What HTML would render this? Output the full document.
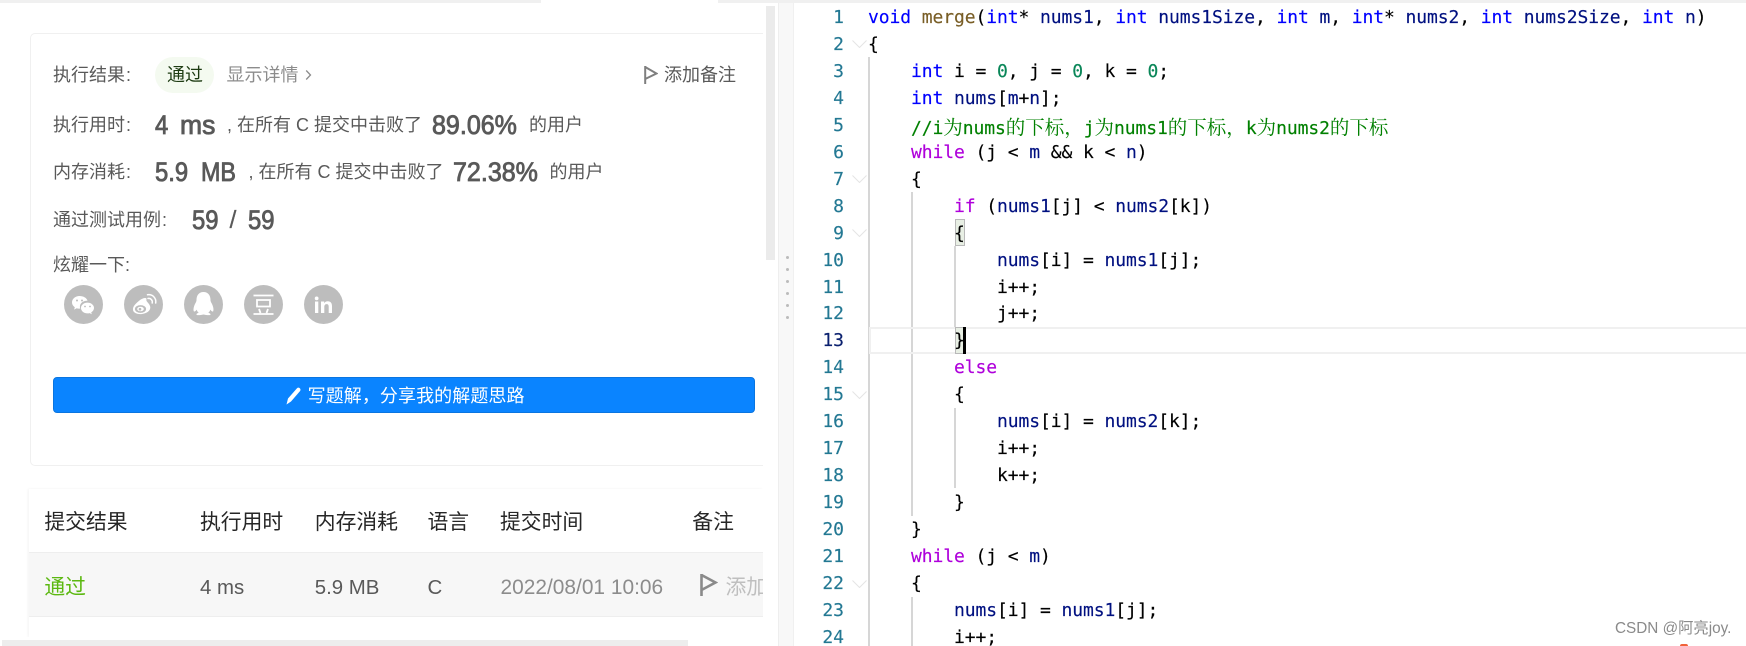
<!DOCTYPE html>
<html lang="zh"><head><meta charset="utf-8"><title>CSDN</title>
<style>
html,body{margin:0;padding:0;width:1746px;height:646px;overflow:hidden;background:#fff}
body{position:relative;font-family:"Liberation Sans","Noto Sans CJK SC",sans-serif;color:#595959}
.a{position:absolute;white-space:pre;line-height:30px;height:30px;font-size:18px}
.b{font-size:26.5px;font-weight:400;color:#595959;-webkit-text-stroke:.85px #595959;transform-origin:0 50%}
.th{font-size:20.8px;color:#262626}
.td{font-size:20.4px;color:#595959}
.box{position:absolute}
.co{position:relative;left:1px}
#code{position:absolute;left:868px;top:5px;font-family:"DejaVu Sans Mono",monospace;font-size:18px;letter-spacing:-.09px;color:#000;-webkit-text-stroke:.15px}
#code div{height:26.96px;line-height:26.96px;white-space:pre}
#nums{position:absolute;left:804px;width:40px;top:5px;text-align:right;font-family:"DejaVu Sans Mono",monospace;font-size:18px;color:#237893;-webkit-text-stroke:.15px}
#nums div{height:26.96px;line-height:26.96px}
.k{color:#00f}.v{color:#001080}.n{color:#098658}.f{color:#795e26}.c{color:#af00db}.g{color:#008000}
.z{font-family:"Noto Serif CJK SC",serif;font-size:19.5px;letter-spacing:0;-webkit-text-stroke:0}
.guide{position:absolute;width:2px;background:#d6d6d6}
.chev{position:absolute;left:852px;width:15px;height:8px}
.circ{position:absolute;top:285px;width:39px;height:39px}
</style></head><body>
<!-- top strip -->
<div class="box" style="left:0;top:0;width:1746px;height:3px;background:#f0f0f0"></div>
<div class="box" style="left:541px;top:0;width:177px;height:3px;background:#fff"></div>
<!-- gutter -->
<div class="box" style="left:778px;top:3px;width:16px;height:643px;background:#f8f8f8;border-left:1px solid #eee;box-sizing:border-box"></div>
<div class="box" style="left:793px;top:3px;width:1px;height:643px;background:#f0f0f0"></div>
<div class="box" style="left:786px;top:256px;width:3px;height:3px;border-radius:2px;background:#bbb"></div>
<div class="box" style="left:786px;top:268px;width:3px;height:3px;border-radius:2px;background:#bbb"></div>
<div class="box" style="left:786px;top:280px;width:3px;height:3px;border-radius:2px;background:#bbb"></div>
<div class="box" style="left:786px;top:292px;width:3px;height:3px;border-radius:2px;background:#bbb"></div>
<div class="box" style="left:786px;top:304px;width:3px;height:3px;border-radius:2px;background:#bbb"></div>
<div class="box" style="left:786px;top:316px;width:3px;height:3px;border-radius:2px;background:#bbb"></div>

<!-- left scrollbars -->
<div class="box" style="left:766px;top:6px;width:9px;height:254px;background:#ebebeb"></div>
<div class="box" style="left:2px;top:640px;width:686px;height:6px;background:#ededed"></div>

<!-- result card -->
<div class="box" style="left:30px;top:33px;width:733px;height:433px;box-sizing:border-box;border:1px solid #f0f0f0;border-right:0;border-radius:5px 0 0 5px"></div>

<div class="a" style="left:53px;top:60px">执行结果<span class="co">:</span></div>
<div class="box" style="left:155px;top:57px;width:59px;height:36px;border-radius:18px;background:#f4faf0"></div>
<div class="a" style="left:167px;top:60px;color:#1d3b12">通过</div>
<div class="a" style="left:226.5px;top:60px;color:#8c8c8c">显示详情</div>
<svg class="box" style="left:305px;top:69px" width="7" height="12" viewBox="0 0 7 12"><path d="M1.2 1.5 5.5 6 1.2 10.5" fill="none" stroke="#8c8c8c" stroke-width="1.3"/></svg>
<svg class="box" style="left:644px;top:65px" width="14" height="20" viewBox="0 0 14 20"><path d="M1.2 1v18M1.2 2 12.500 8.500 1.200 14" fill="none" stroke="#7f7f7f" stroke-width="2"/></svg>
<div class="a" style="left:664px;top:60px">添加备注</div>

<div class="a" style="left:53px;top:110px">执行用时<span class="co">:</span></div>
<div class="a b" style="left:155px;top:110px;transform:scaleX(.9)">4</div>
<div class="a b" style="left:180px;top:110px">ms</div>
<div class="a" style="left:227px;top:110px">, 在所有 C 提交中击败了</div>
<div class="a b" style="left:432px;top:110px;transform:scaleX(.945)">89.06%</div>
<div class="a" style="left:529px;top:110px">的用户</div>

<div class="a" style="left:53px;top:157px">内存消耗<span class="co">:</span></div>
<div class="a b" style="left:155px;top:157px;transform:scaleX(.9)">5.9</div>
<div class="a b" style="left:200.7px;top:157px;transform:scaleX(.88)">MB</div>
<div class="a" style="left:248.5px;top:157px">, 在所有 C 提交中击败了</div>
<div class="a b" style="left:453px;top:157px;transform:scaleX(.945)">72.38%</div>
<div class="a" style="left:549.5px;top:157px">的用户</div>

<div class="a" style="left:53px;top:205px">通过测试用例<span class="co">:</span></div>
<div class="a b" style="left:191.7px;top:205px;transform:scaleX(.9)">59</div>
<div class="a b" style="left:229.5px;top:205px;font-size:25px;-webkit-text-stroke:.2px #595959">/</div>
<div class="a b" style="left:248px;top:205px;transform:scaleX(.9)">59</div>

<div class="a" style="left:53px;top:250px">炫耀一下<span class="co" style="left:0">:</span></div>

<!-- share icons -->
<svg class="circ" style="left:64px" viewBox="0 0 39 39"><circle cx="19.5" cy="19.5" r="19.5" fill="#bdbdbd"/><path d="M15.5 11c-4.2 0-7.5 2.9-7.5 6.4 0 2 1.1 3.7 2.8 4.9l-.7 2.3 2.6-1.4c.9.3 1.8.4 2.8.4h.7c-.2-.6-.3-1.2-.3-1.8 0-3.300 3-6 6.900-6h.7C22.800 13 19.500 11 15.500 11z" fill="#fff"/><path d="M30 23c0-3-2.900-5.400-6.500-5.400S17 20 17 23s2.900 5.400 6.500 5.400c.8 0 1.500-.1 2.200-.3l2.100 1.200-.6-1.900c1.700-1.100 2.800-2.600 2.800-4.400z" fill="#fff"/><circle cx="13" cy="15.500" r="1" fill="#bdbdbd"/><circle cx="18" cy="15.500" r="1" fill="#bdbdbd"/><circle cx="21" cy="21.500" r=".9" fill="#bdbdbd"/><circle cx="26" cy="21.500" r=".9" fill="#bdbdbd"/></svg>
<svg class="circ" style="left:124px" viewBox="0 0 39 39"><circle cx="19.5" cy="19.500" r="19.500" fill="#bdbdbd"/><path d="M23 16.500c-1-.4-.3-2.300-.6-3-.8-1.200-4.300-.3-7.300 2.200C11.500 18.800 8.500 21.600 9 25c.6 3.300 5 4.500 9 4 5-.6 8.300-3.300 8.300-6.500 0-2.500-2.300-4.500-3.300-6z" fill="#fff"/><ellipse cx="16.500" cy="24" rx="5.600" ry="3.900" fill="#bdbdbd"/><ellipse cx="16.500" cy="24" rx="3.300" ry="2.300" fill="#fff"/><circle cx="16" cy="24.200" r="1.300" fill="#bdbdbd"/><path d="M24 13.500c2.500-.5 4.800 1.500 4.200 4.500M23.500 9.800c5-.8 9 3.200 8.200 8.200" fill="none" stroke="#fff" stroke-width="1.500" stroke-linecap="round"/></svg>
<svg class="circ" style="left:184px" viewBox="0 0 39 39"><circle cx="19.500" cy="19.500" r="19.500" fill="#bdbdbd"/><path d="M19.500 7c-4.700 0-7 3.600-7 8 0 1.200-.3 1.800-1.200 3.400-1.300 2.500-2.300 6-1.500 7.800.7 1 2-.4 2.800-1.600.4 1.300 1.100 2.400 2.100 3.200-1.500.5-2.600 1.200-2.100 1.900.7.700 3.800.5 6.900-.2 3.100.7 6.200.9 6.900.2.500-.7-.6-1.400-2.100-1.900 1-.8 1.700-1.900 2.100-3.200.8 1.200 2.100 2.600 2.800 1.600.8-1.800-.2-5.300-1.500-7.800-.9-1.600-1.200-2.200-1.200-3.400 0-4.400-2.300-8-7-8z" fill="#fff"/></svg>
<svg class="circ" style="left:244px" viewBox="0 0 39 39"><circle cx="19.500" cy="19.500" r="19.500" fill="#bdbdbd"/><path d="M9.500 10.500h20M13 15h13v6.500H13zM15 24l1.500 4M24 24l-1.500 4M9.500 29h20" fill="none" stroke="#fff" stroke-width="1.800"/></svg>
<svg class="circ" style="left:304px" viewBox="0 0 39 39"><circle cx="19.500" cy="19.500" r="19.500" fill="#bdbdbd"/><path d="M11 16.500h3.300V28H11zM12.650 11.500a1.900 1.900 0 1 1 0 3.800 1.900 1.900 0 0 1 0-3.800zM17 16.500h3.200v1.700c.7-1.200 2-2 3.500-2 3 0 4.300 1.900 4.300 5V28h-3.300v-6.200c0-1.800-.6-2.700-2-2.700-1.500 0-2.400 1-2.400 2.900v6H17z" fill="#fff"/></svg>

<!-- button -->
<div class="box" style="left:53px;top:377px;width:702px;height:36px;box-sizing:border-box;background:#0a84ff;border:1px solid #0a75e0;border-radius:4px"></div>
<svg class="box" style="left:284.500px;top:386px" width="18" height="20" viewBox="0 0 18 20"><path d="M1.500 18.500 3 12.500 12 2.200c.8-.8 2-.8 2.800 0s1 2 .2 2.900L6 15.500z" fill="#fff"/></svg>
<div class="a" style="left:307.600px;top:381px;color:#fff;letter-spacing:.08px">写题解，分享我的解题思路</div>

<!-- table -->
<div class="box" style="left:29px;top:489px;width:734px;height:148px;background:#fff;box-shadow:-1px 0 3px rgba(0,0,0,.05);clip-path:inset(-4px 0 0 -4px)"></div>
<div class="box" style="left:29px;top:552px;width:734px;height:65px;box-sizing:border-box;background:#f7f7f7;border-top:1px solid #eee;border-bottom:1px solid #eee"></div>
<div class="a th" style="left:44.400px;top:508px">提交结果</div>
<div class="a th" style="left:200px;top:508px">执行用时</div>
<div class="a th" style="left:314.800px;top:508px">内存消耗</div>
<div class="a th" style="left:427.500px;top:508px">语言</div>
<div class="a th" style="left:500px;top:508px">提交时间</div>
<div class="a th" style="left:692.300px;top:508px">备注</div>
<div class="a td" style="left:44.400px;top:573px;color:#5cb811;font-size:20.800px">通过</div>
<div class="a td" style="left:200px;top:573px">4 ms</div>
<div class="a td" style="left:314.800px;top:573px">5.9 MB</div>
<div class="a td" style="left:427.500px;top:573px">C</div>
<div class="a td" style="left:500.500px;top:573px;color:#8c8c8c;font-size:20.900px">2022/08/01 10:06</div>
<svg class="box" style="left:700px;top:573px" width="18" height="24" viewBox="0 0 18 24"><path d="M1.500 1v22M1.500 2 15.500 9.500 1.500 17" fill="none" stroke="#8a8a8a" stroke-width="2.600"/></svg>
<div class="box" style="left:725.500px;top:573px;width:37.500px;height:30px;overflow:hidden"><div class="a td" style="left:0;top:0;color:#bfbfbf;font-size:20.800px">添加</div></div>

<!-- editor -->
<div class="guide" style="left:868px;top:57px;height:589px"></div>
<div class="guide" style="left:911px;top:192px;height:324px"></div>
<div class="guide" style="left:911px;top:597px;height:49px"></div>
<div class="guide" style="left:954px;top:246px;height:81px"></div>
<div class="guide" style="left:954px;top:408px;height:80px"></div>
<div class="box" style="left:869px;top:327px;width:877px;height:27px;box-sizing:border-box;border:2px solid #f0f0f0;border-right:0"></div>
<div class="box" style="left:954.500px;top:219px;width:10px;height:27px;box-sizing:border-box;background:#e8efe4;border:1px solid #b9b9b9"></div>
<div class="box" style="left:954.500px;top:327px;width:10px;height:27px;box-sizing:border-box;background:#e8efe4;border:1px solid #b9b9b9"></div>

<svg class="chev" style="top:40px" viewBox="0 0 15 8"><path d="M.5.500 7.500 7.500 14.500.500" fill="none" stroke="#e4e4e4" stroke-width="1"/></svg>
<svg class="chev" style="top:175px" viewBox="0 0 15 8"><path d="M.5.500 7.500 7.500 14.500.500" fill="none" stroke="#e4e4e4" stroke-width="1"/></svg>
<svg class="chev" style="top:229px" viewBox="0 0 15 8"><path d="M.5.500 7.500 7.500 14.500.500" fill="none" stroke="#e4e4e4" stroke-width="1"/></svg>
<svg class="chev" style="top:391px" viewBox="0 0 15 8"><path d="M.5.500 7.500 7.500 14.500.500" fill="none" stroke="#e4e4e4" stroke-width="1"/></svg>
<svg class="chev" style="top:580px" viewBox="0 0 15 8"><path d="M.5.500 7.500 7.500 14.500.500" fill="none" stroke="#e4e4e4" stroke-width="1"/></svg>

<div id="nums"><div>1</div><div>2</div><div>3</div><div>4</div><div>5</div><div>6</div><div>7</div><div>8</div><div>9</div><div>10</div><div>11</div><div>12</div><div style="color:#0b216f">13</div><div>14</div><div>15</div><div>16</div><div>17</div><div>18</div><div>19</div><div>20</div><div>21</div><div>22</div><div>23</div><div>24</div></div>

<div id="code"><div><span class="k">void</span> <span class="f">merge</span>(<span class="k">int</span>* <span class="v">nums1</span>, <span class="k">int</span> <span class="v">nums1Size</span>, <span class="k">int</span> <span class="v">m</span>, <span class="k">int</span>* <span class="v">nums2</span>, <span class="k">int</span> <span class="v">nums2Size</span>, <span class="k">int</span> <span class="v">n</span>)</div>
<div>{</div>
<div>    <span class="k">int</span> i = <span class="n">0</span>, j = <span class="n">0</span>, k = <span class="n">0</span>;</div>
<div>    <span class="k">int</span> <span class="v">nums</span>[<span class="v">m</span>+<span class="v">n</span>];</div>
<div>    <span class="g">//i<span class="z">为</span>nums<span class="z">的下标，</span>j<span class="z">为</span>nums1<span class="z">的下标，</span>k<span class="z">为</span>nums2<span class="z">的下标</span></span></div>
<div>    <span class="c">while</span> (j &lt; <span class="v">m</span> &amp;&amp; k &lt; <span class="v">n</span>)</div>
<div>    {</div>
<div>        <span class="c">if</span> (<span class="v">nums1</span>[j] &lt; <span class="v">nums2</span>[k])</div>
<div>        {</div>
<div>            <span class="v">nums</span>[i] = <span class="v">nums1</span>[j];</div>
<div>            i++;</div>
<div>            j++;</div>
<div>        }</div>
<div>        <span class="c">else</span></div>
<div>        {</div>
<div>            <span class="v">nums</span>[i] = <span class="v">nums2</span>[k];</div>
<div>            i++;</div>
<div>            k++;</div>
<div>        }</div>
<div>    }</div>
<div>    <span class="c">while</span> (j &lt; <span class="v">m</span>)</div>
<div>    {</div>
<div>        <span class="v">nums</span>[i] = <span class="v">nums1</span>[j];</div>
<div>        i++;</div></div>
<div class="box" style="left:963px;top:327px;width:3px;height:27px;background:#000"></div>

<!-- watermark -->
<div class="a" style="left:1615px;top:614px;font-size:15.300px;color:#8a8a8a">CSDN @阿亮joy.</div>
<div class="box" style="left:1680px;top:644px;width:8px;height:2px;border-radius:4px 4px 0 0;background:#f0623a"></div>
</body></html>
